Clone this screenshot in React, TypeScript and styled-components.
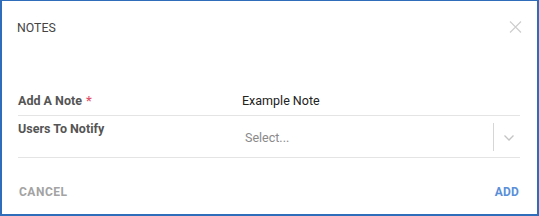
import React from "react";
import styled, { createGlobalStyle } from "styled-components";

const Global = createGlobalStyle`
  html, body { margin: 0; padding: 0; background: #ffffff; }
  body { font-family: Roboto, "Liberation Sans", Arial, sans-serif; }
  * { box-sizing: border-box; }
`;

const Dialog = styled.div`
  width: 539px;
  height: 216px;
  border: 2px solid #2f6dba;
  border-top-width: 1px;
  background: #fff;
  display: flex;
  flex-direction: column;
`;

const Header = styled.div`
  height: 52px;
  padding: 0 15px 0 15px;
  display: flex;
  align-items: center;
  justify-content: space-between;
`;

const Title = styled.div`
  font-size: 12.3px;
  color: #444;
  padding-top: 1px;
`;

const CloseButton = styled.button`
  border: none;
  background: none;
  padding: 0;
  width: 14px;
  height: 14px;
  display: flex;
  align-items: center;
  justify-content: center;
  cursor: pointer;
`;

const Body = styled.div`
  padding: 33px 17px 0 16px;
  display: flex;
  flex-direction: column;
`;

const Row = styled.div<{ $height: number }>`
  display: grid;
  grid-template-columns: 221px 1fr;
  height: ${(p) => p.$height}px;
  border-bottom: 1px solid #e4e4e4;
`;

const Label = styled.div<{ $top?: boolean }>`
  font-size: 12.5px;
  font-weight: 700;
  color: #555;
  display: flex;
  align-items: ${(p) => (p.$top ? "flex-start" : "center")};
  padding-top: ${(p) => (p.$top ? "5px" : "0")};
  line-height: 16px;
`;

const Required = styled.span`
  color: #e0526a;
  margin-left: 4px;
`;

const Value = styled.div`
  font-size: 12.5px;
  color: #222;
  display: flex;
  align-items: center;
  padding-left: 3px;
`;

const SelectControl = styled.div`
  display: flex;
  align-items: center;
  height: 100%;
`;

const Placeholder = styled.div`
  flex: 1;
  font-size: 12.5px;
  color: #8a8a8a;
  padding-left: 6px;
  padding-top: 1px;
`;

const Separator = styled.div`
  width: 1px;
  height: 28px;
  background: #d6d6d6;
  margin-top: 1px;
`;

const Indicator = styled.div`
  width: 26px;
  display: flex;
  align-items: center;
  justify-content: center;
  padding-top: 3px;
  padding-left: 4px;
`;

const Footer = styled.div`
  flex: 1;
  display: flex;
  align-items: center;
  justify-content: space-between;
  padding: 12px 18px 0 17px;
`;

const TextButton = styled.button<{ $primary?: boolean }>`
  border: none;
  background: none;
  padding: 0;
  font-family: inherit;
  font-size: 12px;
  font-weight: 700;
  letter-spacing: ${(p) => (p.$primary ? "0.2px" : "0.5px")};
  color: ${(p) => (p.$primary ? "#5a8fd8" : "#a3a3a3")};
  cursor: pointer;
`;

export default function App() {
  return (
    <>
      <Global />
      <Dialog>
        <Header>
          <Title>NOTES</Title>
          <CloseButton aria-label="close">
            <svg width="13" height="12" viewBox="0 0 13 12">
              <path d="M1 0.5 L12 11.5 M12 0.5 L1 11.5" stroke="#cdcdcd" strokeWidth="1.2" fill="none" />
            </svg>
          </CloseButton>
        </Header>
        <Body>
          <Row $height={30}>
            <Label>
              Add A Note<Required>*</Required>
            </Label>
            <Value>Example Note</Value>
          </Row>
          <Row $height={42}>
            <Label $top>Users To Notify</Label>
            <SelectControl>
              <Placeholder>Select...</Placeholder>
              <Separator />
              <Indicator>
                <svg width="12" height="8" viewBox="0 0 12 8">
                  <path d="M1.5 1.5 L6 6 L10.5 1.5" stroke="#c4c4c4" strokeWidth="1.3" fill="none" />
                </svg>
              </Indicator>
            </SelectControl>
          </Row>
        </Body>
        <Footer>
          <TextButton>CANCEL</TextButton>
          <TextButton $primary>ADD</TextButton>
        </Footer>
      </Dialog>
    </>
  );
}
